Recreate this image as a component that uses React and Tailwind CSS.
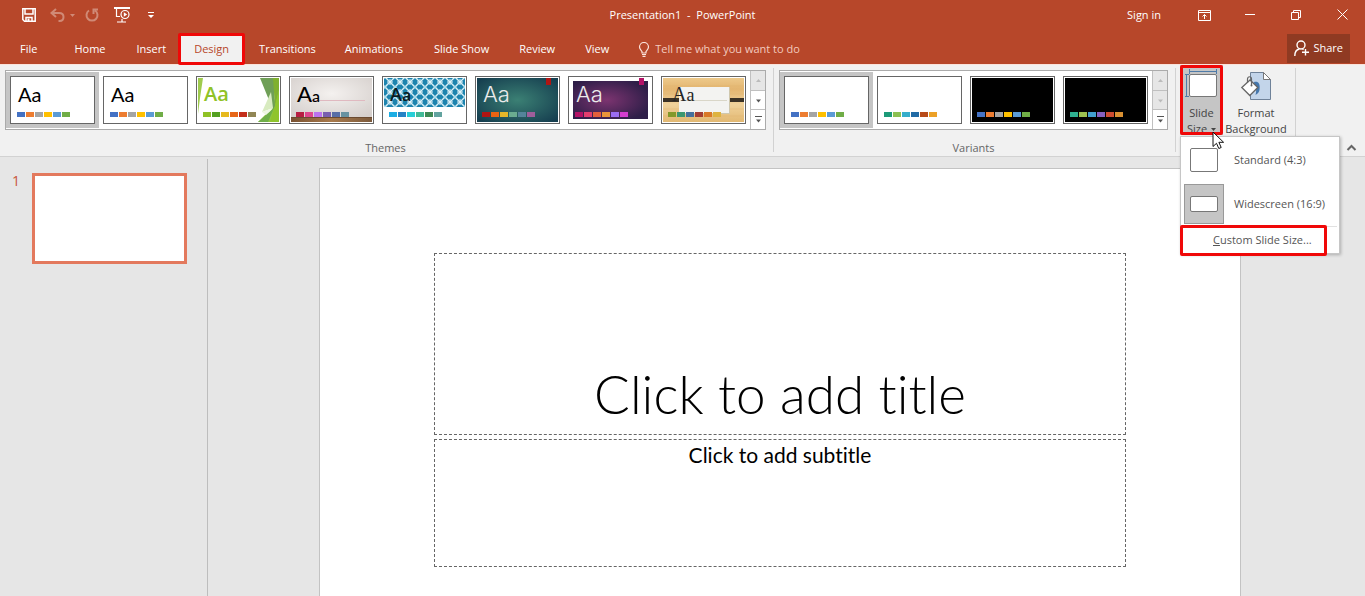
import React, { useState } from 'react';
import { clsx } from 'clsx';

const OFFICE = ['bg-[#4472c4]', 'bg-[#ed7d31]', 'bg-[#a5a5a5]', 'bg-[#ffc000]', 'bg-[#5b9bd5]', 'bg-[#70ad47]'];

const tabs = [
  { name: 'File', pad: 'pl-5 pr-[22px]' },
  { name: 'Home', pad: 'px-[15px]' },
  { name: 'Insert', pad: 'pl-4 pr-3' },
  { name: 'Design', pad: 'px-[13px]', active: true },
  { name: 'Transitions', pad: 'pl-[14px] pr-[13px]' },
  { name: 'Animations', pad: 'px-4' },
  { name: 'Slide Show', pad: 'px-[15px]' },
  { name: 'Review', pad: 'px-[15px]' },
  { name: 'View', pad: 'px-[15px]' },
];

const FacetArt = () => (
  <>
    <path d="M0 0h5L2 20 0 36z" fill="#9fcb4e" />
    <path d="M74 30L81 8v36H60z" fill="#8fc63f" />
    <path d="M62 0h14l1 28-2 4z" fill="#6f9f57" />
    <path d="M75 0h6v12l-4 16z" fill="#7fb02f" />
    <path d="M73 14l2 16-11 4z" fill="#d8ebc0" />
    <path d="M64 34l11-4-6 8z" fill="#eef6e3" />
    <path d="M76 30L60 44h10z" fill="#6fae49" />
    <path d="M81 12v32h-9l5-16z" fill="#8fc42c" />
  </>
);

const GalleryArt = () => (
  <>
    <defs>
      <radialGradient id="wall" cx="0.5" cy="0.4" r="0.7">
        <stop offset="0" stopColor="#f4f1ef" />
        <stop offset="1" stopColor="#d6d0cd" />
      </radialGradient>
      <linearGradient id="floor" x1="0" x2="1" y1="0" y2="0">
        <stop offset="0" stopColor="#7a5232" />
        <stop offset="0.5" stopColor="#a87a4c" />
        <stop offset="1" stopColor="#7c5a3c" />
      </linearGradient>
    </defs>
    <path d="M0 0h81v39H0z" fill="url(#wall)" />
    <path d="M16 22.500h58" stroke="#e0b9c0" />
    <path d="M0 39h81v5H0z" fill="url(#floor)" />
    <path d="M0 39.500h81" stroke="#6b4a30" />
  </>
);

const IntegralArt = () => (
  <>
    <defs>
      <pattern id="lattice" width="10" height="10" patternUnits="userSpaceOnUse" x="1" y="-1">
        <path d="M0 0h10v10H0z" fill="#1c83ae" />
        <path d="M0 0l10 10M10 0L0 10" stroke="#d6eef6" strokeWidth="1.400" />
        <path d="M5 2v6M2 5h6" stroke="#e8f6fb" strokeWidth="1" />
        <path d="M0 1.500L1.500 0M8.500 0L10 1.500M0 8.500L1.500 10M8.500 10L10 8.500" stroke="#8fcbe0" />
      </pattern>
    </defs>
    <path d="M0 0h81v29H0z" fill="url(#lattice)" />
  </>
);

const IonArt = () => (
  <>
    <defs>
      <radialGradient id="teal" cx="0.5" cy="0.5" r="0.65">
        <stop offset="0" stopColor="#3b8074" />
        <stop offset="1" stopColor="#163f50" />
      </radialGradient>
    </defs>
    <path d="M0 0h81v44H0z" fill="url(#teal)" />
    <path d="M69 0h5v7h-5z" fill="#b01513" />
  </>
);

const IonBoardroomArt = () => (
  <>
    <defs>
      <radialGradient id="plum" cx="0.45" cy="0.5" r="0.6">
        <stop offset="0" stopColor="#7c3470" />
        <stop offset="1" stopColor="#2e1e48" />
      </radialGradient>
    </defs>
    <path d="M3 3h75v38H3z" fill="url(#plum)" />
    <path d="M69 0h5v7h-5z" fill="#b31166" />
  </>
);

const OrganicArt = () => (
  <>
    <defs>
      <linearGradient id="wood" x1="0" x2="0" y1="0" y2="1">
        <stop offset="0" stopColor="#edc98a" />
        <stop offset="0.25" stopColor="#e3b570" />
        <stop offset="0.6" stopColor="#f0d29b" />
        <stop offset="1" stopColor="#e2b872" />
      </linearGradient>
    </defs>
    <path d="M0 0h81v44H0z" fill="url(#wood)" />
    <path d="M0 8h81M0 16h81M0 31h81M0 38h81" stroke="#dfae68" opacity="0.3" />
    <path d="M0 20h17v4H0zM65 20h16v4H65z" fill="#3b3226" />
    <path d="M16 9h51v27H16z" fill="#cfc7ad" />
    <path d="M16 9h50v26H16z" fill="#f3f3f1" />
    <path d="M24 22.500h40" stroke="#d9d6c8" />
  </>
);

const themes = [
  { name: 'Office Theme', colors: OFFICE, big: "font-['Lato'] text-xl text-black" },
  { name: 'Office', colors: OFFICE, big: "font-['Lato'] text-xl text-black" },
  {
    name: 'Facet',
    art: FacetArt,
    big: "font-['Open_Sans'] font-semibold text-xl text-[#90c226]",
    colors: ['bg-[#90c226]', 'bg-[#54a021]', 'bg-[#e6b91e]', 'bg-[#e76618]', 'bg-[#c42f1a]', 'bg-[#918655]'],
  },
  {
    name: 'Gallery',
    art: GalleryArt,
    big: "font-['Lato'] font-medium text-[22px] text-black",
    small: 'text-base',
    colors: ['bg-[#b71e42]', 'bg-[#de478e]', 'bg-[#bc72f0]', 'bg-[#795faf]', 'bg-[#586ea6]', 'bg-[#6892a0]'],
  },
  {
    name: 'Integral',
    art: IntegralArt,
    big: "font-['Open_Sans'] font-semibold text-lg text-[#0b1a20]",
    small: 'text-base',
    colors: ['bg-[#1cade4]', 'bg-[#2683c6]', 'bg-[#27ced7]', 'bg-[#42ba97]', 'bg-[#3e8853]', 'bg-[#62a39f]'],
  },
  {
    name: 'Ion',
    art: IonArt,
    big: "font-['Inter'] font-light text-[22px] text-[#ebebeb]",
    colors: ['bg-[#b01513]', 'bg-[#ea6312]', 'bg-[#e6b729]', 'bg-[#6aac90]', 'bg-[#54849a]', 'bg-[#9e5e9b]'],
  },
  {
    name: 'Ion Boardroom',
    art: IonBoardroomArt,
    big: "font-['Inter'] font-light text-[22px] text-[#ebebeb]",
    colors: ['bg-[#b31166]', 'bg-[#e33d6f]', 'bg-[#e45f3c]', 'bg-[#e9943a]', 'bg-[#9b6bf2]', 'bg-[#d53dd0]'],
  },
  {
    name: 'Organic',
    art: OrganicArt,
    big: "pl-[3px] font-['Liberation_Serif'] text-xl text-[#262626]",
    small: 'text-lg',
    colors: ['bg-[#83992a]', 'bg-[#3c9770]', 'bg-[#44709d]', 'bg-[#a23c33]', 'bg-[#d97828]', 'bg-[#deb340]'],
  },
];

const variants = [
  { name: 'Variant 1', colors: OFFICE },
  { name: 'Variant 2', colors: ['bg-[#1d9a78]', 'bg-[#8cc152]', 'bg-[#36aecb]', 'bg-[#216ba5]', 'bg-[#b84b1a]', 'bg-[#eca127]'] },
  { name: 'Variant 3', dark: true, colors: OFFICE },
  {
    name: 'Variant 4',
    dark: true,
    colors: ['bg-[#2fb08f]', 'bg-[#9cc04f]', 'bg-[#429fce]', 'bg-[#8560bf]', 'bg-[#cc4b30]', 'bg-[#d99032]'],
  },
];

function Thumb({ item, selected, onSelect }) {
  const Art = item.art;
  return (
    <button
      type="button"
      aria-label={item.name}
      aria-pressed={selected}
      onClick={onSelect}
      className={clsx('shrink-0 p-1', selected && 'bg-[#c5c5c5]')}
    >
      <span className="relative block h-12 w-[85px] border border-[#666] bg-white p-px">
        <span className={clsx('block h-full', item.dark && 'bg-black')}>
          {Art && (
            <svg viewBox="0 0 81 44" className="block h-full w-full" aria-hidden="true">
              <Art />
            </svg>
          )}
        </span>
        {item.big && (
          <span className={clsx('absolute top-[3px] left-[7px] leading-7', item.big)}>
            A<span className={item.small}>a</span>
          </span>
        )}
        <span className="absolute bottom-1.5 left-1.5 flex gap-px">
          {item.colors.map((c) => (
            <span key={c} className={clsx('h-[5px] w-2', c)} />
          ))}
        </span>
      </span>
    </button>
  );
}

function ScrollButton({ label, d, disabled }) {
  return (
    <button
      type="button"
      aria-label={label}
      disabled={disabled}
      className={clsx(
        'flex flex-1 items-center justify-center border-b border-[#c0c0c0] last:border-b-0',
        disabled ? 'bg-[#e6e6e6] text-[#bbb]' : 'bg-white text-[#555]'
      )}
    >
      <svg width="7" height="7" viewBox="0 0 7 7" fill="currentColor" aria-hidden="true">
        <path d={d} />
      </svg>
    </button>
  );
}

function Gallery({ label, items, atEnd }) {
  const [selected, setSelected] = useState(0);
  return (
    <>
      <div className="flex flex-col pr-[7px] pl-[5px]">
        <div className="mt-[2px] flex h-[60px] border border-[#ababab] bg-white">
          <div className="flex items-center">
            {items.map((item, i) => (
              <div key={item.name} className="w-[93px]">
                <Thumb item={item} selected={selected === i} onSelect={() => setSelected(i)} />
              </div>
            ))}
          </div>
          <div className="flex w-[15px] flex-col border-l border-[#c0c0c0]">
            <ScrollButton label="Row up" disabled d="M1 5l2.500-3L6 5z" />
            <ScrollButton label="Row down" disabled={atEnd} d="M1 2.500h5L3.500 5.500z" />
            <ScrollButton label={`More ${label}`} d="M0 0h7v1H0zM1 3.500h5L3.500 6.500z" />
          </div>
        </div>
        <div className="mt-auto text-center leading-4 text-[#666]">{label}</div>
      </div>
      <div className="mb-1 w-px bg-[#d2d2d2]" />
    </>
  );
}

function TitleBar() {
  return (
    <div className="grid h-[30px] grid-cols-[1fr_auto_1fr] items-center">
      <div className="flex items-center pl-[22px]">
        <button type="button" aria-label="Save" className="mr-[14px]">
          <svg width="14" height="14" viewBox="0 0 14 14" fill="none" stroke="currentColor" strokeWidth="1.500">
            <path d="M.8.8h12.400v12.400H2.500L.8 11.500z" />
            <path d="M3 1v5h8V1M4 13V9.500h6V13" />
            <path d="M5.500 10.500h2V13h-2z" fill="currentColor" stroke="none" />
          </svg>
        </button>
        <button type="button" aria-label="Undo" className="mr-[5px] text-[#d08a76]">
          <svg width="15" height="14" viewBox="0 0 15 14" fill="none" stroke="currentColor" strokeWidth="2">
            <path d="M6 1L1.500 5 6 9M2 5h7c3 0 4.500 1.800 4.500 4S12 13 9.500 13H8.500" />
          </svg>
        </button>
        <button type="button" aria-label="Undo history" className="mr-[10px] text-[#d08a76]">
          <svg width="5" height="3" viewBox="0 0 5 3" fill="currentColor">
            <path d="M0 0h5L2.500 3z" />
          </svg>
        </button>
        <button type="button" aria-label="Repeat" className="mr-[15px] text-[#d08a76]">
          <svg width="14" height="14" viewBox="0 0 14 14" fill="none" stroke="currentColor" strokeWidth="2">
            <path d="M4 2.500A5.500 5.500 0 1 0 10 2.500M8.500 6V1.500H13" />
          </svg>
        </button>
        <button type="button" aria-label="Start from beginning" className="mr-[17px]">
          <svg width="17" height="16" viewBox="0 0 17 16" fill="none" stroke="currentColor" strokeWidth="1.200">
            <path d="M0 1h16" strokeWidth="2" />
            <path d="M2.500 1v8.500H6M8 12v2.500M3 15h9" />
            <circle cx="11" cy="7.500" r="4" />
            <path d="M9.800 5.300v4.400l3.400-2.200z" fill="currentColor" stroke="none" />
          </svg>
        </button>
        <button type="button" aria-label="Customize Quick Access Toolbar">
          <svg width="6" height="7" viewBox="0 0 6 7" fill="currentColor">
            <path d="M0 0h6v1H0zM0 3h6L3 6z" />
          </svg>
        </button>
      </div>
      <h1 className="whitespace-pre">Presentation1  -  PowerPoint</h1>
      <div className="flex items-center justify-end">
        <button type="button" className="mr-5">Sign in</button>
        <button type="button" aria-label="Ribbon Display Options" className="flex w-[46px] justify-center">
          <svg width="13" height="11" viewBox="0 0 13 11" fill="none" stroke="currentColor">
            <path d="M.5.5h12v10H.5zM.5 2.500h12M6.500 9V4.500M4.500 6.500l2-2 2 2" />
          </svg>
        </button>
        <button type="button" aria-label="Minimize" className="flex w-[46px] justify-center">
          <svg width="10" height="11" viewBox="0 0 10 11" stroke="currentColor">
            <path d="M0 4.500h10" />
          </svg>
        </button>
        <button type="button" aria-label="Restore" className="flex w-[46px] justify-center">
          <svg width="10" height="11" viewBox="0 0 10 11" fill="none" stroke="currentColor">
            <path d="M.5 2.500h7v7h-7zM2.500 2.500v-2h7v7h-2" />
          </svg>
        </button>
        <button type="button" aria-label="Close" className="flex w-[46px] justify-center">
          <svg width="11" height="12" viewBox="0 0 11 12" stroke="currentColor">
            <path d="M.5.500l10 10M10.500.500l-10 10" />
          </svg>
        </button>
      </div>
    </div>
  );
}

function TabBar() {
  return (
    <nav className="flex h-[34px] items-start pt-[3px]">
      {tabs.map((tab) => (
        <button
          key={tab.name}
          type="button"
          className={clsx(
            'h-8',
            tab.pad,
            tab.active && 'relative z-10 rounded-xs border-3 border-[#f00808] bg-[#f1f1f1] text-[#b7472a]'
          )}
        >
          {tab.name}
        </button>
      ))}
      <label className="flex h-8 flex-1 items-center gap-[5px] pl-[14px]">
        <svg width="12" height="15" viewBox="0 0 12 15" fill="none" stroke="#fbe3db" strokeWidth="1.200" aria-hidden="true">
          <path d="M4 11V9.500C3 8 1.500 7 1.500 5a4.500 4.500 0 0 1 9 0c0 2-1.500 3-2.500 4.500V11zM4 12.500h4M4.500 14.400h3" />
        </svg>
        <input
          type="text"
          aria-label="Tell me what you want to do"
          placeholder="Tell me what you want to do"
          className="w-56 bg-transparent outline-none placeholder:text-[#f3cabe]"
        />
      </label>
      <button type="button" className="mt-px mr-[15px] flex h-[29px] items-center gap-1 bg-[#8f3a22] px-[7px]">
        <svg width="15" height="17" viewBox="0 0 15 17" fill="none" stroke="currentColor" strokeWidth="1.400" aria-hidden="true">
          <circle cx="7" cy="5" r="4" />
          <path d="M.8 16c0-4 1.700-6.500 4.700-7M8.500 9l1 .8M11.500 9v6.500M8 12.300h7" />
        </svg>
        Share
      </button>
    </nav>
  );
}

function SizeMenu() {
  return (
    <div
      role="menu"
      className="absolute top-[71px] left-0 z-20 w-40 border border-[#c6c6c6] bg-white pt-px text-[#555] shadow-[1px_1px_3px_rgba(0,0,0,0.25)]"
    >
      <button type="button" role="menuitem" className="flex h-11 w-full items-center gap-[10px] pl-[3px] text-left">
        <span className="flex size-10 items-center justify-center">
          <span className="h-6 w-7 rounded-xs border border-[#777] bg-white" />
        </span>
        Standard (4:3)
      </button>
      <button type="button" role="menuitem" className="flex h-11 w-full items-center gap-[10px] pl-[3px] text-left">
        <span className="flex size-10 items-center justify-center border border-[#999] bg-[#c5c5c5]">
          <span className="h-4 w-7 rounded-xs border border-[#777] bg-white" />
        </span>
        Widescreen (16:9)
      </button>
      <hr className="mr-0.5 ml-8 border-[#e1e1e1]" />
      <button
        type="button"
        role="menuitem"
        className="-mt-0.5 -mb-[3px] -ml-px block h-[31px] w-[147px] rounded-xs border-3 border-[#f00808] bg-white pl-[30px] text-left whitespace-nowrap"
      >
        <u>C</u>ustom Slide Size...
      </button>
    </div>
  );
}

function Ribbon() {
  return (
    <div className="flex h-[93px] border-t border-b border-t-[#fbe3db] border-b-[#d2d2d2] bg-[#f1f1f1] text-[#444]">
      <div className="flex pt-[3px]">
        <Gallery label="Themes" items={themes} />
        <Gallery label="Variants" items={variants} atEnd />
      </div>
      <div className="relative flex pl-1">
        <div className="relative">
          <button
            type="button"
            aria-haspopup="menu"
            aria-expanded="true"
            className="relative flex h-[70px] w-[43px] flex-col items-center overflow-hidden bg-[#c5c5c5] pt-1 leading-4"
          >
            <svg width="33" height="30" viewBox="0 0 33 30" fill="none" aria-hidden="true" className="mb-1.5 shrink-0">
              <path d="M4 2.500h28M4.500 0v5M31.500 0v5M1.500 5v23M0 5.500h4M0 27.500h4" stroke="#4f7ba8" />
              <rect x="4.500" y="5.500" width="27" height="22" rx="1.500" fill="#fff" stroke="#777" />
            </svg>
            <span>Slide</span>
            <span className="flex items-center gap-1">
              Size
              <svg width="5" height="3" viewBox="0 0 5 3" fill="currentColor" aria-hidden="true">
                <path d="M0 0h5L2.500 3z" />
              </svg>
            </span>
            <span className="absolute inset-0 rounded-xs border-3 border-[#f00808]" />
          </button>
          <SizeMenu />
          {/* mouse pointer */}
          <svg width="13" height="19" viewBox="0 0 13 19" aria-hidden="true" className="absolute top-[66px] left-8 z-30">
            <path d="M1 1v14.500l3.500-3.200 2.300 5.200 2.400-1-2.300-5.200h4.700z" fill="#fff" stroke="#111" />
          </svg>
        </div>
        <button type="button" className="flex h-[70px] w-[66px] flex-col items-center pt-1 leading-4">
          <svg width="32" height="32" viewBox="0 0 32 32" fill="none" aria-hidden="true" className="mb-1 shrink-0">
            <path d="M10.500 3.500h13l7 7v20h-20z" fill="#c3d5ea" stroke="#6f8299" />
            <path d="M23.500 3.500v7h7z" fill="#fff" stroke="#777" />
            <path d="M14 13c4-1 6.500 1 5.500 8-.3 2-2 4-4 5 1-3.500 1-7-1-9z" fill="#4477ad" />
            <path d="M10 11L1.800 18.500l8 8 8-8z" fill="#fff" stroke="#666" strokeWidth="1.300" />
            <path d="M7.500 14v-4c0-3 4-3 4 0v6" stroke="#666" strokeWidth="1.200" />
            <circle cx="11.500" cy="16.500" r="1" fill="#666" />
          </svg>
          <span>Format</span>
          <span>Background</span>
        </button>
        <div className="mt-[3px] mb-1 ml-[6px] w-px bg-[#d2d2d2]" />
      </div>
      <button type="button" aria-label="Collapse the Ribbon" className="mt-auto mr-2 mb-1 ml-auto">
        <svg width="11" height="8" viewBox="0 0 11 8" fill="none" stroke="#666" strokeWidth="2" aria-hidden="true">
          <path d="M1.500 6l4-4 4 4" />
        </svg>
      </button>
    </div>
  );
}

export default function App() {
  return (
    <div className="flex h-screen flex-col overflow-hidden bg-[#e6e6e6] font-['Open_Sans',sans-serif] text-[11px]">
      <header className="bg-[#b7472a] text-white">
        <TitleBar />
        <TabBar />
      </header>
      <Ribbon />
      <div className="flex min-h-0 flex-1">
        <aside className="mt-0.5 flex w-52 shrink-0 items-start gap-3 border-r border-[#bdbdbd] pt-[14px] pl-3">
          <span className="w-2 text-sm leading-4 text-[#c8553a]">1</span>
          <button type="button" aria-label="Slide 1" className="h-[91px] w-[155px] border-3 border-[#e3795d] bg-white" />
        </aside>
        <main className="min-w-0 flex-1 pt-[11px] pr-[124px] pl-[111px]">
          <section className="aspect-video border border-[#c3c3c3] bg-white px-[114px] pt-[84px] font-['Lato',sans-serif] text-black [font-variant-ligatures:none]">
            <div className="flex h-[182px] items-end justify-center border border-dashed border-[#666] pb-2 text-[53px] leading-16 font-light">
              Click to add title
            </div>
            <div className="mt-1 h-32 border border-dashed border-[#666] pt-px text-center text-[21px] leading-7">
              Click to add subtitle
            </div>
          </section>
        </main>
      </div>
    </div>
  );
}
